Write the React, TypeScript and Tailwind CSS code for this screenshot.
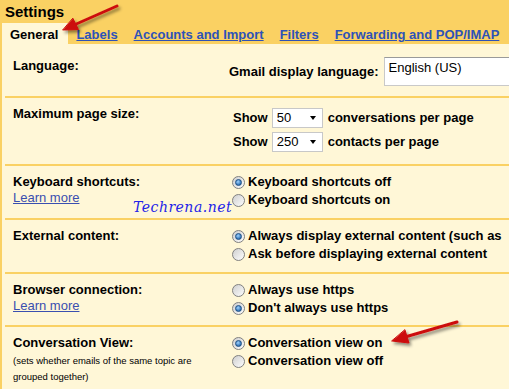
import React from "react";

const Radio = ({ checked }: { checked?: boolean }) => (
  <span className="ml-[3px] mr-[3px] w-[13px] h-[13px] shrink-0 rounded-full border border-[#808080] bg-[linear-gradient(135deg,#cfcfcf,#fdfdfd)] flex items-center justify-center">
    {checked && (
      <span className="w-[7px] h-[7px] rounded-full border border-[#1d4f85] bg-[radial-gradient(circle_at_40%_35%,#9fd2ff,#2a6db0_75%)]" />
    )}
  </span>
);

const RadioRow = ({ checked, text }: { checked?: boolean; text: string }) => (
  <div className="h-[18px] flex items-center whitespace-nowrap">
    <Radio checked={checked} />
    <span className="font-bold">{text}</span>
  </div>
);

const Select = ({ value }: { value: string }) => (
  <span className="ml-[4px] w-[51px] h-[20px] shrink-0 bg-white border border-[#c8c8c8] pl-[4px] pr-[6px] flex items-center justify-between font-normal">
    <span>{value}</span>
    <span className="w-0 h-0 border-l-[3.5px] border-r-[3.5px] border-t-[4px] border-l-transparent border-r-transparent border-t-black" />
  </span>
);

const LearnMore = () => (
  <div className="leading-[16px] underline text-[#3a4fb0] font-normal">Learn more</div>
);

export default function App() {
  return (
    <div className="w-[509px] h-[389px] overflow-hidden relative bg-[#FAD163] text-black text-[13px] font-['Liberation_Sans',Arial,sans-serif] flex flex-col">
      <div className="h-[23px] pl-[5px] pt-[3px] text-[15px] leading-[18px] font-bold shrink-0">Settings</div>
      <div className="h-[21px] pl-[2px] flex shrink-0 whitespace-nowrap text-[13px] leading-[15px] font-bold">
        <div className="bg-[#FFF7D7] pl-[8px] pr-[10px] pt-[4px]">General</div>
        <div className="px-[8px] pt-[4px] underline text-[#2d52b8]">Labels</div>
        <div className="px-[8px] pt-[4px] underline text-[#2d52b8]">Accounts and Import</div>
        <div className="px-[8px] pt-[4px] underline text-[#2d52b8]">Filters</div>
        <div className="px-[8px] pt-[4px] underline text-[#2d52b8]">Forwarding and POP/IMAP</div>
      </div>
      <div className="flex-1 bg-[#FFF7D7] border-l-2 border-[#FAD163] pl-[3px] relative">
        {/* Language */}
        <div className="h-[54px] border-b-2 border-[#FAD163] pl-[8px] flex">
          <div className="w-[216px] shrink-0 pt-[14px] leading-[16px] font-bold">Language:</div>
          <div className="pt-[13px]">
            <div className="flex items-center h-[29px] whitespace-nowrap">
              <span className="font-bold">Gmail display language:</span>
              <div className="ml-[5px] w-[140px] h-[29px] bg-white border border-[#c9c9c9] border-t-[#9a9a9a] pl-[4px] pt-[2px] leading-[15px] self-start">
                English (US)
              </div>
            </div>
          </div>
        </div>
        {/* Maximum page size */}
        <div className="h-[68px] border-b-2 border-[#FAD163] pl-[8px] flex">
          <div className="w-[216px] shrink-0 pt-[8px] leading-[16px] font-bold">Maximum page size:</div>
          <div className="pt-[10px] flex flex-col gap-[4px]">
            <div className="h-[20px] flex items-center whitespace-nowrap font-bold">
              <span className="ml-[4px]">Show</span>
              <Select value="50" />
              <span className="ml-[5px]">conversations per page</span>
            </div>
            <div className="h-[20px] flex items-center whitespace-nowrap font-bold">
              <span className="ml-[4px]">Show</span>
              <Select value="250" />
              <span className="ml-[5px]">contacts per page</span>
            </div>
          </div>
        </div>
        {/* Keyboard shortcuts */}
        <div className="h-[54px] border-b-2 border-[#FAD163] pl-[8px] flex relative">
          <div className="w-[216px] shrink-0 pt-[8px]">
            <div className="leading-[16px] font-bold">Keyboard shortcuts:</div>
            <LearnMore />
          </div>
          <div className="pt-[7px]">
            <RadioRow checked text="Keyboard shortcuts off" />
            <RadioRow text="Keyboard shortcuts on" />
          </div>
          <div className="absolute left-[128px] top-[33px] text-[14px] italic text-[#2424e8] font-['DejaVu_Serif',serif] tracking-[0.5px] leading-[16px]">
            Techrena.net
          </div>
        </div>
        {/* External content */}
        <div className="h-[54px] border-b-2 border-[#FAD163] pl-[8px] flex">
          <div className="w-[216px] shrink-0 pt-[8px] leading-[16px] font-bold">External content:</div>
          <div className="pt-[7px]">
            <RadioRow checked text="Always display external content (such as" />
            <RadioRow text="Ask before displaying external content" />
          </div>
        </div>
        {/* Browser connection */}
        <div className="h-[53px] border-b-2 border-[#FAD163] pl-[8px] flex">
          <div className="w-[216px] shrink-0 pt-[8px]">
            <div className="leading-[16px] font-bold">Browser connection:</div>
            <LearnMore />
          </div>
          <div className="pt-[7px]">
            <RadioRow text="Always use https" />
            <RadioRow checked text="Don't always use https" />
          </div>
        </div>
        {/* Conversation View */}
        <div className="pl-[8px] flex">
          <div className="w-[216px] shrink-0 pt-[8px]">
            <div className="leading-[16px] font-bold">Conversation View:</div>
            <div className="mt-[2px] text-[9.5px] leading-[16px] font-normal whitespace-nowrap">
              (sets whether emails of the same topic are
              <br />
              grouped together)
            </div>
          </div>
          <div className="pt-[7px]">
            <RadioRow checked text="Conversation view on" />
            <RadioRow text="Conversation view off" />
          </div>
        </div>
      </div>
      <svg className="absolute left-0 top-0 pointer-events-none" width="509" height="389" viewBox="0 0 509 389">
        <defs>
          <filter id="sh" x="-20%" y="-50%" width="150%" height="200%">
            <feDropShadow dx="2" dy="2.5" stdDeviation="1.6" floodColor="#000" floodOpacity="0.45" />
          </filter>
        </defs>
        <g filter="url(#sh)" fill="#cc1010" stroke="#cc1010" strokeLinecap="round" strokeLinejoin="round">
          <line x1="117" y1="6" x2="74" y2="25" strokeWidth="3" />
          <polygon points="63,30 78.5,29.5 73,18.5" strokeWidth="1" />
          <line x1="457" y1="322" x2="405" y2="337" strokeWidth="3" />
          <polygon points="392,341 409,343 405,330" strokeWidth="1" />
        </g>
      </svg>
    </div>
  );
}
